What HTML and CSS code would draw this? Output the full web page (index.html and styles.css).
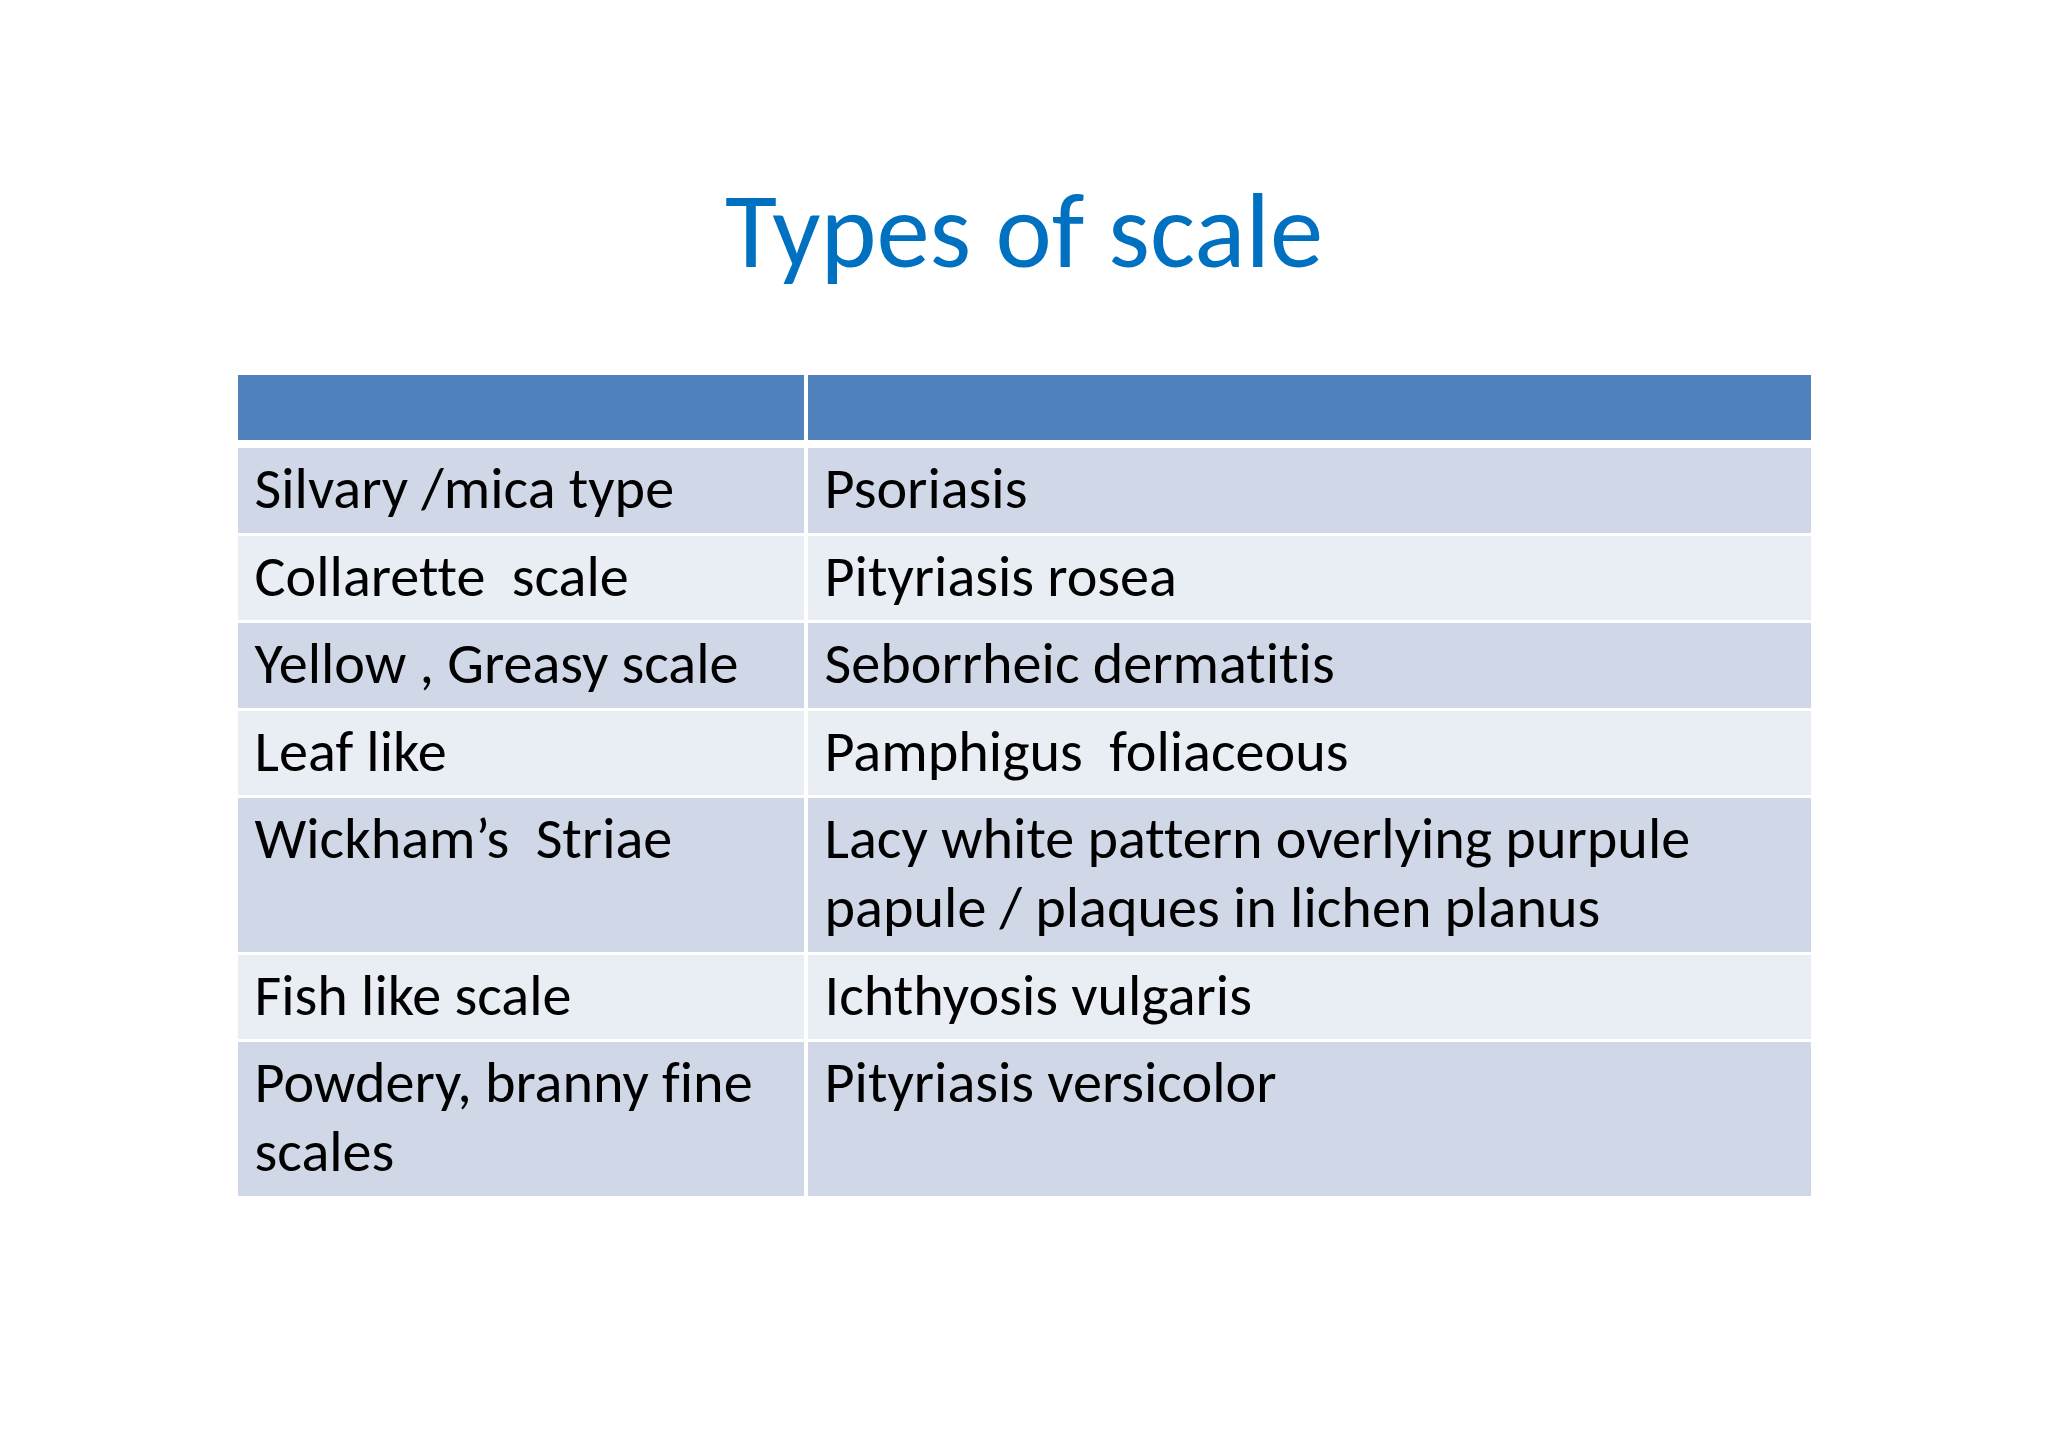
FILE: index.html
```html
<!DOCTYPE html>
<html lang="en">
<head>
<meta charset="utf-8">
<title>Types of scale</title>
<link rel="stylesheet" href="styles.css">
</head>
<body>
<main class="slide">
  <h1 class="title">Types of scale</h1>
  <div class="table">
    <div class="cell head"></div><div class="cell head"></div>
    <div class="cell odd c1">Silvary /mica type</div><div class="cell odd c2">Psoriasis</div>
    <div class="cell even c1">Collarette  scale</div><div class="cell even c2">Pityriasis rosea</div>
    <div class="cell odd c1">Yellow , Greasy scale</div><div class="cell odd c2">Seborrheic dermatitis</div>
    <div class="cell even c1">Leaf like</div><div class="cell even c2">Pamphigus  foliaceous</div>
    <div class="cell odd c1">Wickham’s  Striae</div><div class="cell odd c2">Lacy white pattern overlying purpule papule / plaques in lichen planus</div>
    <div class="cell even c1">Fish like scale</div><div class="cell even c2">Ichthyosis vulgaris</div>
    <div class="cell odd c1">Powdery, branny fine scales</div><div class="cell odd c2">Pityriasis versicolor</div>
  </div>
</main>
</body>
</html>
```
FILE: styles.css
```css
html, body {
  margin: 0;
  padding: 0;
  background: #ffffff;
}
body {
  font-family: Carlito, Calibri, "Liberation Sans", sans-serif;
  font-variant-ligatures: none;
  color: #000000;
}
.slide {
  width: 2048px;
  height: 1447px;
  padding-top: 166px;
  box-sizing: border-box;
}
.title {
  margin: 0;
  font-weight: normal;
  font-size: 106.7px;
  line-height: 130px;
  color: #0070c0;
  text-align: center;
}
.table {
  margin: 79px auto 0;
  width: 1573px;
  display: grid;
  grid-template-columns: 566px 1003px;
  column-gap: 4px;
  row-gap: 3px;
}
.cell {
  font-size: 58.2px;
  line-height: 69px;
  padding: 6px 17px 9.5px;
  white-space: pre-wrap;
}
.c2 {
  padding-left: 17px;
  padding-right: 17px;
}
.head {
  background: #4f81bd;
  height: 65px;
  padding: 0;
  margin-bottom: 5px;
}
.odd {
  background: #d0d8e8;
}
.even {
  background: #e9edf4;
}
```
